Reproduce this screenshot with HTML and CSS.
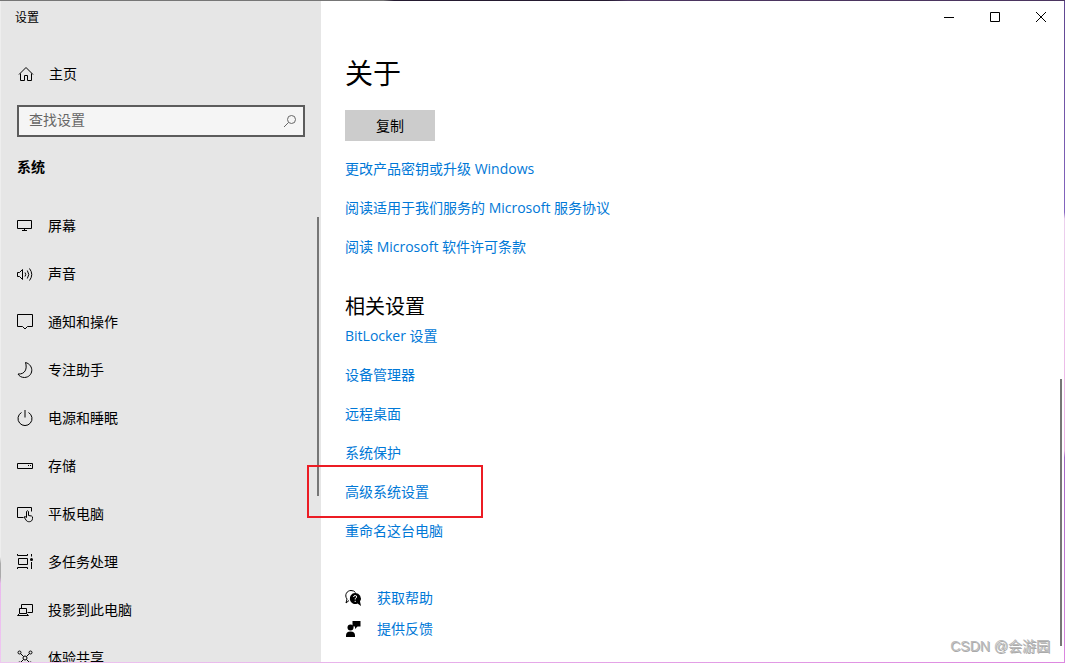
FILE: index.html
```html
<!DOCTYPE html>
<html lang="zh-CN">
  <head>
    <meta charset="UTF-8">
    <meta name="viewport" content="width=device-width, initial-scale=1.0">
    <title>设置</title>
    <link rel="stylesheet" href="styles.css">
  </head>
  <body>
    <div class="window">
      <aside class="sidebar">
        <div class="title">设置</div>
        <a class="home" href="#">
          <svg width="16" height="16" viewBox="0 0 16 16"><path d="M1 8.500L8 1.500l7 7M2.500 7.500v7h4v-5h3v5h4v-7"/></svg>
          主页
        </a>
        <div class="search">
          <input type="text" aria-label="查找设置" placeholder="查找设置">
          <svg width="14" height="14" viewBox="0 0 14 14"><circle cx="8.500" cy="5.500" r="4"/><path d="M5.500 8.500l-4.500 4.500"/></svg>
        </div>
        <h2>系统</h2>
        <nav>
          <a href="#"><svg width="18" height="18" viewBox="0 0 18 18"><path d="M1.500 3.500h14v8h-14zM8.500 11.500v2M6 13.500h5"/></svg>屏幕</a>
          <a href="#"><svg width="18" height="18" viewBox="0 0 18 18"><path d="M1.500 7.500h2l3-3v10l-3-3h-2zM9 7.500q1.500 2 0 4M11.300 5.500q3 4 0 8M13.500 3.500q4.500 6 0 12"/></svg>声音</a>
          <a href="#"><svg width="18" height="18" viewBox="0 0 18 18"><path d="M1.500 1.500h15v12h-5l-2.500 2.500-2.500-2.500h-5z"/></svg>通知和操作</a>
          <a href="#"><svg width="18" height="18" viewBox="0 0 18 18"><path d="M9.500 1.500c9 2.500 8 14.500-1 15-3 0-5.300-1.300-6.500-3.500 7 .5 9.500-5 7.500-11.500z"/></svg>专注助手</a>
          <a href="#"><svg width="18" height="18" viewBox="0 0 18 18"><path d="M5.500 3.500a7 7 0 1 0 7 0M9 1v7.500"/></svg>电源和睡眠</a>
          <a href="#"><svg width="18" height="18" viewBox="0 0 18 18"><path d="M1.500 6.500h15v5h-15zM12 8.500h1M14 8.500h1"/></svg>存储</a>
          <a href="#"><svg width="18" height="18" viewBox="0 0 18 18"><path d="M7.500 12.500h-6v-10h14v4M10.500 12.500V6.500q1-1.500 2 0v4l3 .5q1.500.5 1 2.500c0 4-5.500 4-6.500 1.500l-2-3q1-1 2.500.5"/></svg>平板电脑</a>
          <a href="#"><svg width="18" height="18" viewBox="0 0 18 18"><path d="M1.500 1v1.500h10V1M2.500 5.500h9v6h-9zM1.500 16v-1.500h10V16M15.500 1v2.500M15.500 9v7"/><circle class="dot" cx="15.500" cy="6.500" r="1.500"/></svg>多任务处理</a>
          <a href="#"><svg width="18" height="18" viewBox="0 0 18 18"><path d="M5.500 7.500v-4h11v8h-5M3.500 7.500h7v5h-7zM3.500 12.500l-2 2h11l-2-2"/></svg>投影到此电脑</a>
          <a href="#"><svg width="18" height="18" viewBox="0 0 18 18"><path d="M4.500 4.500l3 3M13.500 4.500l-3 3M7.500 10.500l-3 3M10.500 10.500l3 3"/><circle cx="3.500" cy="3.500" r="1.500"/><circle cx="14.500" cy="3.500" r="1.500"/><circle cx="9" cy="9" r="2"/><circle cx="3.500" cy="14.500" r="1.500"/><circle cx="14.500" cy="14.500" r="1.500"/></svg>体验共享</a>
        </nav>
        <div class="scrollbar"></div>
      </aside>
      <main>
        <div class="controls">
          <button aria-label="最小化"><svg width="12" height="12" viewBox="0 0 12 12"><path d="M1 6.500h10"/></svg></button>
          <button aria-label="最大化"><svg width="12" height="12" viewBox="0 0 12 12"><path d="M1.500 1.500h9v9h-9z"/></svg></button>
          <button aria-label="关闭"><svg width="12" height="12" viewBox="0 0 12 12"><path d="M1 1l10 10M11 1l-10 10"/></svg></button>
        </div>
        <h1>关于</h1>
        <button class="copy">复制</button>
        <div class="links">
          <a href="#">更改产品密钥或升级 Windows</a>
          <a href="#">阅读适用于我们服务的 Microsoft 服务协议</a>
          <a href="#">阅读 Microsoft 软件许可条款</a>
        </div>
        <h3>相关设置</h3>
        <div class="links">
          <a href="#">BitLocker 设置</a>
          <a href="#">设备管理器</a>
          <a href="#">远程桌面</a>
          <a href="#">系统保护</a>
          <a href="#" class="marked">高级系统设置</a>
          <a href="#">重命名这台电脑</a>
        </div>
        <div class="help">
          <a href="#"><svg width="16" height="16" viewBox="0 0 16 16"><path d="M4 10.500l-3 2.500 1-4C-1 5 2 .5 6 .5q3 0 4.500 2"/><path class="solid" d="M10 3a5.500 5.500 0 1 0 2.500 10.500l3.500 2.500-1-4.500A5.500 5.500 0 0 0 10 3z"/><path class="mark" d="M8.500 7q.2-1.500 1.700-1.500t1.500 1.500q0 .8-1.500 1.500v1M10.200 10.800v1.200"/></svg>获取帮助</a>
          <a href="#"><svg width="16" height="16" viewBox="0 0 16 16"><path class="solid" d="M7.500 0h8v5.500h-3L10 8V5.500H7.500zM1 16v-1.500q0-4 4.500-4t4.500 4V16z"/><circle class="solid" cx="5.500" cy="6.500" r="3"/></svg>提供反馈</a>
        </div>
        <div class="scrollbar"></div>
      </main>
      <div class="watermark">CSDN @会游园</div>
    </div>
  </body>
</html>
```

FILE: styles.css
```css
* {
  box-sizing: border-box;
  margin: 0;
}
body {
  height: 100vh;
  overflow: hidden;
  font-family: "Open Sans", "Noto Sans CJK SC", sans-serif;
  font-size: 14px;
  line-height: 20px;
  color: #000;
  background: #fff;
}
a {
  text-decoration: none;
}
button {
  border: none;
  font: inherit;
}
svg {
  flex: none;
  overflow: visible;
  fill: none;
  stroke: #000;
}
.solid,
.dot {
  fill: #000;
  stroke: none;
}
/* window frame, the desktop shows through at the edges */
.window {
  display: flex;
  position: relative;
  height: 100%;
  padding: 1px;
  background:
    linear-gradient(to right, #767676 36%, #241a30 37%, #241a30 57%, #4b3560 59%) top / 100% 1px no-repeat,
    linear-gradient(to right, #eec8f0, #dd88e0) bottom / 100% 1px no-repeat,
    linear-gradient(#eee 84%, #aaa 85%, #aaa 87%, #eab8ee 88%, #f0c8f2) left / 1px 100% no-repeat,
    linear-gradient(#5f458f, #8565c0 32%, #ecd0ee 33%, #eeb0e6 68%, #a565c8 69%, #dd88e0) right / 1px 100% no-repeat;
}
/* sidebar */
.sidebar {
  position: relative;
  flex: none;
  width: 320px;
  padding: 7px 16px 0;
  overflow: hidden;
  background: #e6e6e6;
}
.title {
  margin-left: -2px;
  font-size: 12px;
}
.home {
  display: flex;
  align-items: center;
  gap: 15px;
  height: 40px;
  margin-top: 26px;
  padding-left: 1px;
  color: #000;
}
.search {
  display: flex;
  align-items: center;
  height: 32px;
  margin-top: 11px;
  padding: 0 6px 0 10px;
  border: 2px solid #5c5c5c;
  background: #f5f5f5;
}
.search input {
  flex: 1;
  min-width: 0;
  padding: 0 0 2px;
  border: none;
  outline: none;
  background: none;
  font: inherit;
}
.search input::placeholder {
  color: #666;
}
.search svg {
  stroke: #666;
}
h2 {
  margin-top: 20px;
  font-size: 14px;
  font-weight: bold;
  line-height: 20px;
}
nav {
  margin: 25px 0 0 -1px;
}
nav a {
  display: flex;
  align-items: center;
  gap: 14px;
  height: 48px;
  color: #000;
}
.scrollbar {
  position: absolute;
  background: #767676;
  width: 2px;
}
.sidebar .scrollbar {
  top: 216px;
  right: 2px;
  height: 279px;
}
/* content */
main {
  position: relative;
  flex: 1;
  padding: 0 24px;
  background: #fff;
}
.controls {
  display: flex;
  justify-content: flex-end;
  margin-right: -24px;
}
.controls button {
  display: flex;
  align-items: center;
  justify-content: center;
  width: 46px;
  height: 32px;
  background: none;
}
h1 {
  margin-top: 20px;
  font-size: 28px;
  font-weight: normal;
  line-height: 40px;
}
.copy {
  width: 90px;
  height: 31px;
  margin-top: 17px;
  background: #ccc;
}
.links {
  display: flex;
  flex-direction: column;
  align-items: flex-start;
  gap: 19px;
}
.copy + .links {
  margin-top: 18px;
}
.links a,
.help a {
  color: #0078d7;
}
h3 {
  margin-top: 35px;
  font-size: 20px;
  font-weight: normal;
  line-height: 30px;
}
h3 + .links {
  margin-top: 4px;
}
.marked {
  position: relative;
}
.marked::after {
  content: "";
  box-sizing: border-box;
  position: absolute;
  top: -17px;
  left: -38px;
  width: 176px;
  height: 53px;
  border: 2px solid #ec1c24;
}
.help {
  display: flex;
  flex-direction: column;
  gap: 11px;
  margin-top: 47px;
}
.help a {
  display: flex;
  align-items: center;
  gap: 16px;
}
.help .mark {
  stroke: #fff;
}
main .scrollbar {
  top: 378px;
  right: 2px;
  height: 267px;
}
.watermark {
  position: absolute;
  right: 15px;
  bottom: 7px;
  font-family: "Liberation Sans", "Noto Sans CJK SC", sans-serif;
  color: #bbb;
  text-shadow: 1px 1px 0 #aaa;
}
```
